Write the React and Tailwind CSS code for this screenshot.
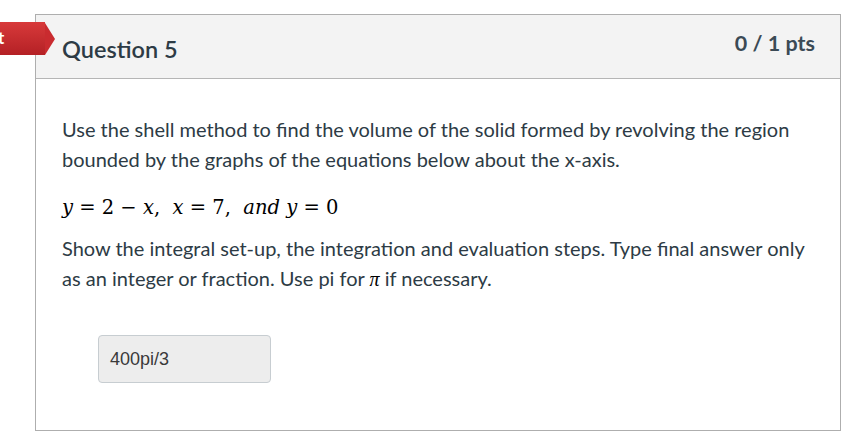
export default function App() {
  return (
    <div className="relative h-[446px] w-[854px] bg-white font-['Lato','Liberation_Sans',sans-serif] text-[#2d3b45]">
      {/* flag tag */}
      <div className="absolute left-0 top-[22px] flex h-[33px] items-center">
        <div className="flex h-full w-[45px] items-start overflow-hidden bg-gradient-to-b from-[#d8393a] to-[#b42025] text-[17px] font-bold leading-none text-white">
          <span className="ml-[-2px] mt-[7px]">t</span>
        </div>
        <div className="h-0 w-0 border-y-[16.5px] border-l-[10px] border-y-transparent border-l-[#c92b2f]" />
      </div>

      <div className="pl-[35px] pt-[14px] pr-[13px]">
        <div className="h-[417px] border border-[#aeaeae]">
          <div className="flex h-[64px] items-start justify-between border-b border-[#b5b5b5] bg-[#f3f3f3] pl-[26px] pr-[25px]">
            <h2 className="mt-[20px] text-[23.5px] font-semibold leading-[28px] text-[#2d3b45]">Question 5</h2>
            <div className="mt-[15px] text-[21.5px] font-bold leading-[26px] text-[#3b4a55]">0 / 1 pts</div>
          </div>

          <div className="pl-[26px] pr-[20px] pt-[35px]">
            <p className="text-[20px] leading-[30px]">
              Use the shell method to find the volume of the solid formed by revolving the region bounded by the graphs of the equations below about the x-axis.
            </p>
            <p className="mt-[21px] font-['DejaVu_Serif','Liberation_Serif',serif] text-[19.5px] leading-[26px] text-black">
              <i>y</i> = 2 − <i>x</i>, &nbsp;<i>x</i> = 7, &nbsp;<i>and</i> <i>y</i> = 0
            </p>
            <p className="mt-[12px] text-[20px] leading-[30px]">
              Show the integral set-up, the integration and evaluation steps. Type final answer only as an integer or fraction. Use pi for <i className="font-['Liberation_Serif',serif] text-black">π</i> if necessary.
            </p>
            <div className="ml-[36px] mt-[41px] flex h-[48px] w-[173px] items-center rounded-[4px] border border-[#c7cdd1] bg-[#ededed] pl-[11px] font-['Liberation_Sans',sans-serif] text-[18px] text-[#3a3a3a]">
              400pi/3
            </div>
          </div>
        </div>
      </div>
    </div>
  );
}
